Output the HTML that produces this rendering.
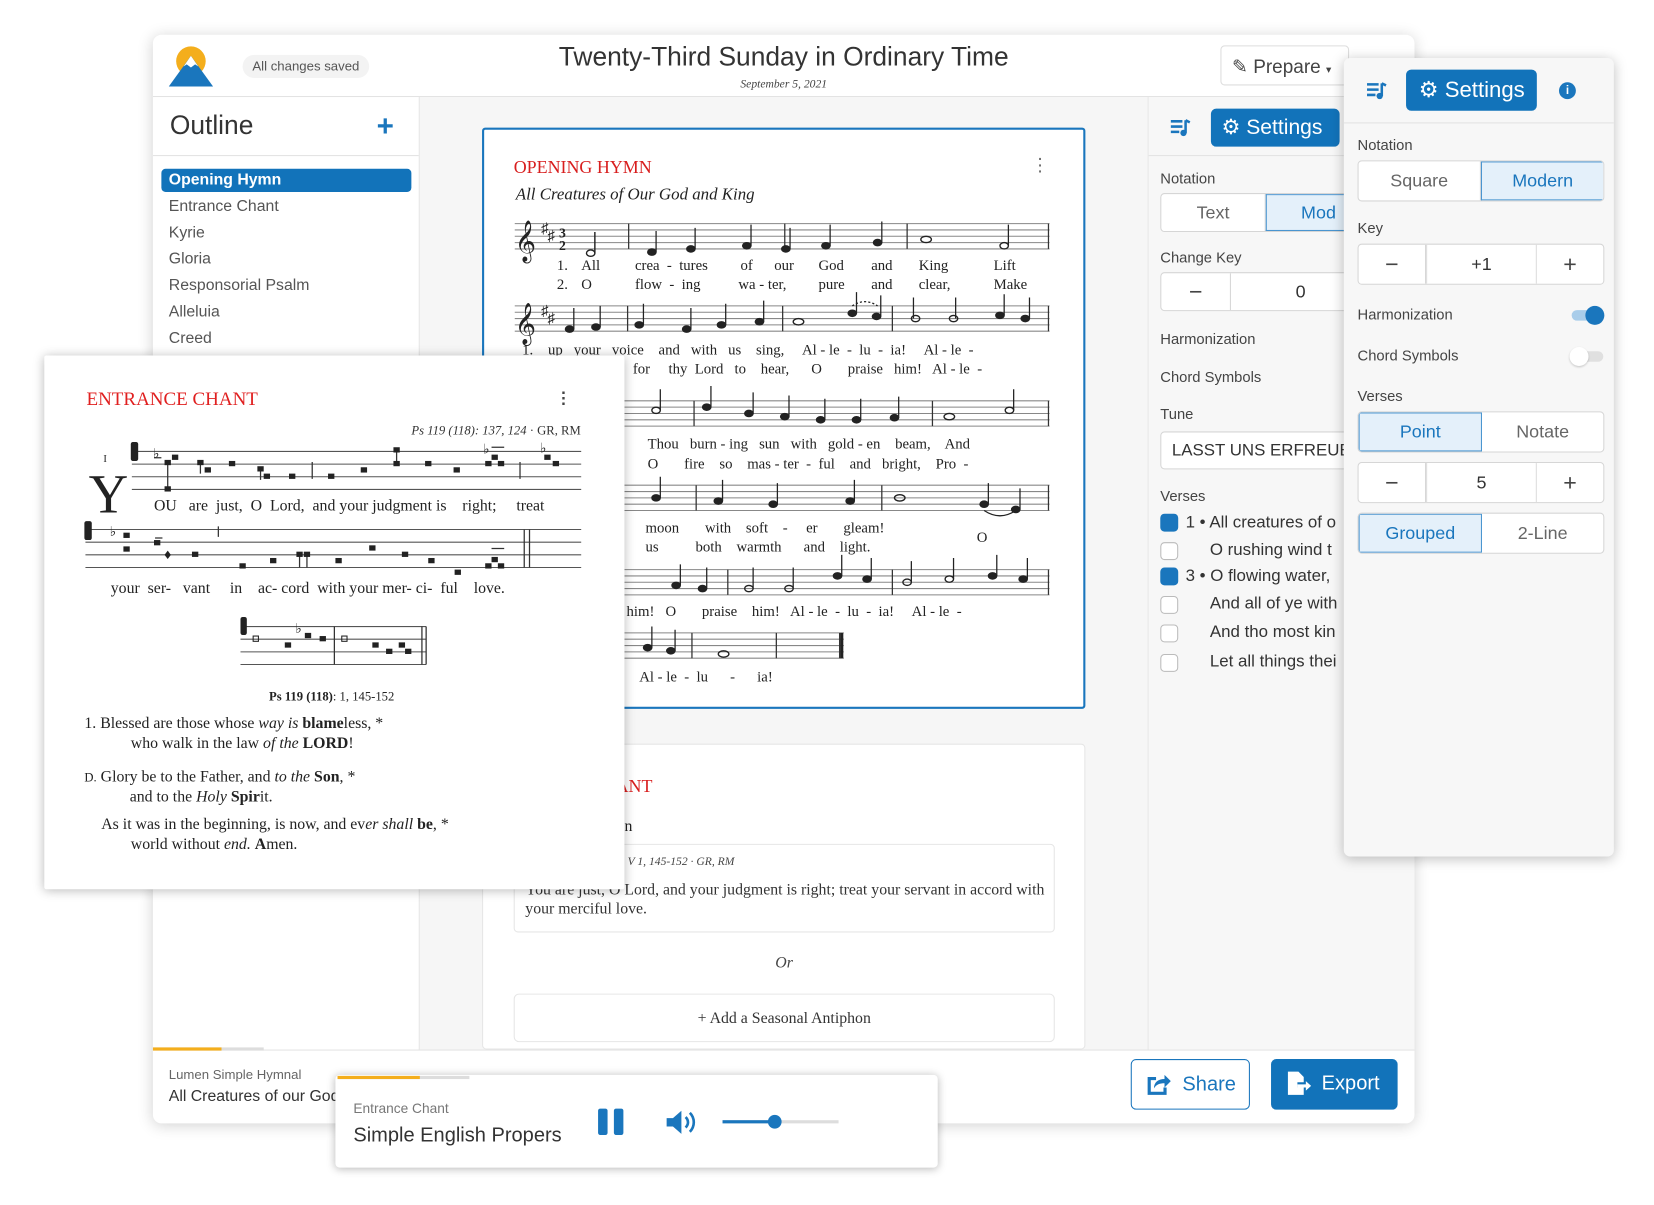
<!DOCTYPE html>
<html><head><meta charset="utf-8"><style>
*{box-sizing:border-box;margin:0;padding:0}
body{width:1654px;height:1204px;background:#fff;position:relative;overflow:hidden;font-family:"Liberation Sans","DejaVu Sans",sans-serif;color:#333}
#w{position:absolute;left:0;top:0;width:1568px;height:1142px;transform:scale(1.0548);transform-origin:0 0}
.a{position:absolute}
.serif{font-family:"Liberation Serif",serif}
.lbl{font-size:14px;color:#444}
.seg{position:absolute;display:flex;border:1px solid #d6d6d6;border-radius:4px;background:#fff;overflow:hidden}
.seg div{flex:1;display:flex;align-items:center;justify-content:center;font-size:17px;color:#666;border-right:1px solid #d6d6d6}
.seg div:last-child{border-right:none}
.seg .on{background:#e4f0fa;color:#1a76bd;border:1px solid #4a95d0}
.cb{position:absolute;width:17px;height:17px;border:1px solid #bbb;border-radius:4px;background:#fff}
.cb.on{background:#1a76bd;border-color:#1a76bd}
.vt{position:absolute;font-size:16px;color:#333;white-space:nowrap}
.ol{position:absolute;left:160px;font-size:15px;color:#555}
svg text{white-space:pre}
</style></head><body><div id="w">

<div class="a" style="left:145px;top:33px;width:1196px;height:1032px;background:#fff;border-radius:8px;box-shadow:0 2px 14px rgba(0,0,0,.18)"></div>
<div class="a" style="left:145px;top:91px;width:1196px;height:1px;background:#e3e3e3"></div>
<svg class="a" style="left:160px;top:43px" width="42" height="40" viewBox="0 0 42 40"><circle cx="21" cy="15" r="14" fill="#f4ae1c"/><path d="M0 39 L21 10 L42 39Z" fill="#1a76bd"/><path d="M14 20 L21 10 L28 20 L25 18 L21 21 L17 18Z" fill="#fff"/></svg>
<div class="a" style="left:230px;top:52px;width:120px;height:22px;border-radius:11px;background:#f3f3f3;font-size:12.5px;color:#555;text-align:center;line-height:22px">All changes saved</div>
<div class="a" style="left:420px;top:40px;width:646px;text-align:center;font-size:25px;color:#333">Twenty-Third Sunday in Ordinary Time</div>
<div class="a serif" style="left:420px;top:74px;width:646px;text-align:center;font-size:11px;font-style:italic;color:#444">September 5, 2021</div>
<div class="a" style="left:1157px;top:43px;width:122px;height:38px;border:1px solid #ddd;border-radius:4px;font-size:18px;color:#444;line-height:38px;padding-left:10px">✎ Prepare <span style="font-size:10px">▾</span></div>

<div class="a" style="left:397px;top:92px;width:1px;height:903px;background:#e3e3e3"></div>
<div class="a" style="left:161px;top:105px;font-size:25px;color:#333">Outline</div>
<div class="a" style="left:357px;top:104px;font-size:28px;color:#1a76bd;font-weight:bold">+</div>
<div class="a" style="left:145px;top:147px;width:252px;height:1px;background:#e3e3e3"></div>
<div class="a" style="left:153px;top:160px;width:237px;height:22px;background:#1273ba;border-radius:4px;color:#fff;font-size:15px;padding-left:7px;line-height:22px;font-weight:bold">Opening Hymn</div>
<div class="ol" style="top:187px">Entrance Chant</div>
<div class="ol" style="top:212px">Kyrie</div>
<div class="ol" style="top:237px">Gloria</div>
<div class="ol" style="top:262px">Responsorial Psalm</div>
<div class="ol" style="top:287px">Alleluia</div>
<div class="ol" style="top:312px">Creed</div>

<div class="a" style="left:398px;top:92px;width:690px;height:903px;background:#f6f6f6"></div>
<div class="a" style="left:1088px;top:92px;width:1px;height:903px;background:#e3e3e3"></div>
<div class="a" style="left:1089px;top:92px;width:252px;height:903px;background:#f7f7f7"></div>
<svg class="a" style="left:1109px;top:112px" width="20" height="18" viewBox="0 0 20 18"><path d="M1 3h11M1 8h11M1 13h8" stroke="#1a76bd" stroke-width="2.4"/><path d="M15 2v12" stroke="#1a76bd" stroke-width="2.4"/><circle cx="13" cy="14" r="3" fill="#1a76bd"/><path d="M15 2l4 2" stroke="#1a76bd" stroke-width="2.4"/></svg>
<div class="a" style="left:1148px;top:103px;width:122px;height:36px;background:#1273ba;border-radius:5px;color:#fff;font-size:20px;line-height:36px;padding-left:10px">⚙ Settings</div>
<div class="a" style="left:1089px;top:147px;width:252px;height:1px;background:#e3e3e3"></div>
<div class="a lbl" style="left:1100px;top:161px">Notation</div>
<div class="seg" style="left:1100px;top:183px;width:200px;height:37px"><div>Text</div><div class="on">Mod</div></div>
<div class="a lbl" style="left:1100px;top:236px">Change Key</div>
<div class="seg" style="left:1100px;top:258px;width:200px;height:37px"><div style="flex:0 0 66px;font-size:22px;color:#444">−</div><div style="color:#333">0</div></div>
<div class="a lbl" style="left:1100px;top:313px">Harmonization</div>
<div class="a lbl" style="left:1100px;top:349px">Chord Symbols</div>
<div class="a lbl" style="left:1100px;top:384px">Tune</div>
<div class="a" style="left:1100px;top:409px;width:200px;height:36px;background:#fff;border:1px solid #d6d6d6;border-radius:4px;font-size:16px;line-height:36px;padding-left:10px;color:#333;white-space:nowrap;overflow:hidden">LASST UNS ERFREUEN</div>
<div class="a lbl" style="left:1100px;top:462px">Verses</div>
<div class="cb on" style="left:1100px;top:487px"></div><div class="vt" style="left:1124px;top:487px">1 • All creatures of o</div>
<div class="cb" style="left:1100px;top:514px"></div><div class="vt" style="left:1147px;top:513px">O rushing wind t</div>
<div class="cb on" style="left:1100px;top:538px"></div><div class="vt" style="left:1124px;top:538px">3 • O flowing water,</div>
<div class="cb" style="left:1100px;top:565px"></div><div class="vt" style="left:1147px;top:564px">And all of ye with</div>
<div class="cb" style="left:1100px;top:592px"></div><div class="vt" style="left:1147px;top:591px">And tho most kin</div>
<div class="cb" style="left:1100px;top:620px"></div><div class="vt" style="left:1147px;top:619px">Let all things thei</div>

<div class="a" style="left:457px;top:121px;width:572px;height:551px;background:#fff;border:2px solid #1a76bd;border-radius:3px"></div>
<div class="a serif" style="left:487px;top:149px;font-size:17px;color:#d81e1e">OPENING HYMN</div>
<div class="a serif" style="left:489px;top:176px;font-size:16px;font-style:italic;color:#222">All Creatures of Our God and King</div>
<div class="a" style="left:983px;top:147px;font-size:18px;color:#666;line-height:6px">·<br>·<br>·</div>
<svg class="a" style="left:0;top:0" width="1568" height="1142">
<g stroke="#888" stroke-width="1">
<path d="M488 212H995M488 218H995M488 224H995M488 230H995M488 236H995"/>
<path d="M488 290H995M488 296H995M488 302H995M488 308H995M488 314H995"/>
<path d="M592 380H995M592 386H995M592 392H995M592 398H995M592 404H995"/>
<path d="M592 460H995M592 466H995M592 472H995M592 478H995M592 484H995"/>
<path d="M592 540H995M592 546H995M592 552H995M592 558H995M592 564H995"/>
<path d="M592 600H800M592 606H800M592 612H800M592 618H800M592 624H800"/>
</g>
<g stroke="#333" stroke-width="1.2">
<path d="M596 212v24M744 212v24M860 212v24M994 212v24"/>
<path d="M595 290v24M742 290v24M846 290v24M994 290v24"/>
<path d="M658 380v24M884 380v24M994 380v24"/>
<path d="M660 460v24M836 460v24M994 460v24"/>
<path d="M690 540v24M846 540v24M994 540v24"/>
<path d="M656 600v24M736 600v24M796 600v24"/>
</g>
<path d="M798 600v24" stroke="#222" stroke-width="3"/>
<g font-family="Liberation Serif,serif" font-size="34" fill="#222"><text x="488" y="240">𝄞</text><text x="488" y="318">𝄞</text></g>
<g font-family="Liberation Serif,serif" font-size="14" fill="#222"><text x="513" y="221">♯</text><text x="519" y="228">♯</text><text x="513" y="299">♯</text><text x="519" y="306">♯</text><text x="530" y="225" font-weight="bold" font-size="13">3</text><text x="530" y="237" font-weight="bold" font-size="13">2</text></g>
<g fill="#222" stroke="#222" stroke-width="1.2">
<ellipse cx="618" cy="239" rx="4" ry="3"/><ellipse cx="655" cy="236" rx="4" ry="3"/><ellipse cx="708" cy="233" rx="4" ry="3"/><ellipse cx="745" cy="236" rx="4" ry="3"/><ellipse cx="783" cy="233" rx="4" ry="3"/><ellipse cx="832" cy="230" rx="4" ry="3"/>
<path d="M564 240v-20M622 239v-20M659 236v-20M712 233v-20M749 236v-20M787 233v-20M836 230v-20M956 233v-20"/>
<ellipse cx="540" cy="312" rx="4" ry="3"/><ellipse cx="565" cy="310" rx="4" ry="3"/><ellipse cx="606" cy="308" rx="4" ry="3"/><ellipse cx="651" cy="312" rx="4" ry="3"/><ellipse cx="684" cy="308" rx="4" ry="3"/><ellipse cx="720" cy="305" rx="4" ry="3"/><ellipse cx="808" cy="297" rx="4" ry="3"/><ellipse cx="831" cy="300" rx="4" ry="3"/><ellipse cx="948" cy="299" rx="4" ry="3"/><ellipse cx="972" cy="302" rx="4" ry="3"/>
<path d="M544 312v-20M569 310v-20M610 308v-20M655 312v-20M688 308v-20M724 305v-20M812 297v-20M835 300v-20M952 299v-20M976 302v-20"/>
<ellipse cx="670" cy="386" rx="4" ry="3"/><ellipse cx="710" cy="392" rx="4" ry="3"/><ellipse cx="744" cy="395" rx="4" ry="3"/><ellipse cx="778" cy="398" rx="4" ry="3"/><ellipse cx="812" cy="398" rx="4" ry="3"/><ellipse cx="848" cy="396" rx="4" ry="3"/>
<path d="M674 386v-20M714 392v-20M748 395v-20M782 398v-20M816 398v-20M852 396v-20"/>
<ellipse cx="622" cy="472" rx="4" ry="3"/><ellipse cx="681" cy="475" rx="4" ry="3"/><ellipse cx="733" cy="478" rx="4" ry="3"/><ellipse cx="806" cy="475" rx="4" ry="3"/><ellipse cx="933" cy="478" rx="4" ry="3"/><ellipse cx="963" cy="483" rx="4" ry="3"/>
<path d="M626 472v-20M685 475v-20M737 478v-20M810 475v-20M937 478v-20M967 483v-20"/>
<ellipse cx="641" cy="555" rx="4" ry="3"/><ellipse cx="666" cy="558" rx="4" ry="3"/><ellipse cx="794" cy="546" rx="4" ry="3"/><ellipse cx="822" cy="549" rx="4" ry="3"/><ellipse cx="941" cy="546" rx="4" ry="3"/><ellipse cx="970" cy="549" rx="4" ry="3"/>
<path d="M645 555v-20M670 558v-20M798 546v-20M826 549v-20M945 546v-20M974 549v-20"/>
<ellipse cx="614" cy="614" rx="4" ry="3"/><ellipse cx="636" cy="617" rx="4" ry="3"/>
<path d="M618 614v-20M640 617v-20"/>
</g>
<g fill="none" stroke="#222" stroke-width="1.3"><ellipse cx="560" cy="240" rx="4" ry="3"/><ellipse cx="952" cy="233" rx="4" ry="3"/><ellipse cx="757" cy="305" rx="5" ry="3"/><ellipse cx="868" cy="302" rx="4" ry="3"/><ellipse cx="904" cy="302" rx="4" ry="3"/><ellipse cx="622" cy="389" rx="4" ry="3"/><ellipse cx="900" cy="395" rx="5" ry="3"/><ellipse cx="957" cy="389" rx="4" ry="3"/><ellipse cx="853" cy="472" rx="5" ry="3"/><ellipse cx="710" cy="558" rx="4" ry="3"/><ellipse cx="748" cy="558" rx="4" ry="3"/><ellipse cx="860" cy="552" rx="4" ry="3"/><ellipse cx="900" cy="549" rx="4" ry="3"/><ellipse cx="686" cy="620" rx="5" ry="3"/><ellipse cx="878" cy="227" rx="5" ry="3"/></g>
<g fill="none" stroke="#222" stroke-width="1.2"><path d="M564 240v-20M866 302v-20M906 302v-20M626 389v-20M961 389v-20M714 558v-20M752 558v-20M864 552v-20M904 549v-20"/><path d="M933 484q15 10 30 0"/><path d="M808 290q12-8 24 0" stroke-dasharray="2 2"/></g>
<g font-family="Liberation Serif,serif" font-size="14" fill="#222">
<text x="528" y="256">1.</text><text x="551" y="256">All</text><text x="602" y="256">crea  -  tures</text><text x="702" y="256">of</text><text x="734" y="256">our</text><text x="776" y="256">God</text><text x="826" y="256">and</text><text x="871" y="256">King</text><text x="942" y="256">Lift</text>
<text x="528" y="274">2.</text><text x="551" y="274">O</text><text x="602" y="274">flow  -  ing</text><text x="700" y="274">wa - ter,</text><text x="776" y="274">pure</text><text x="826" y="274">and</text><text x="871" y="274">clear,</text><text x="942" y="274">Make</text>
<text x="495" y="336">1.    up   your   voice    and   with   us    sing,     Al - le  -  lu  -  ia!     Al - le  -</text>
<text x="600" y="354">for     thy  Lord   to    hear,      O       praise   him!   Al - le  -</text>
<text x="614" y="425">Thou   burn - ing   sun   with   gold - en    beam,    And</text>
<text x="614" y="444">O       fire    so    mas - ter  -  ful    and   bright,    Pro  -</text>
<text x="612" y="505">moon       with    soft    -     er       gleam!</text>
<text x="612" y="523">us          both    warmth      and    light.</text><text x="926" y="514">O</text>
<text x="594" y="584">him!   O       praise    him!   Al - le  -  lu  -  ia!     Al - le  -</text>
<text x="606" y="646">Al - le  -  lu      -      ia!</text>
</g>
</svg>

<div class="a" style="left:457px;top:705px;width:572px;height:290px;background:#fff;border:1px solid #e6e6e6;border-radius:4px"></div>
<div class="a serif" style="left:560px;top:736px;font-size:17px;color:#d81e1e">CHANT</div>
<div class="a serif" style="left:592px;top:776px;font-size:15px;color:#222">n</div>
<div class="a" style="left:487px;top:800px;width:513px;height:84px;border:1px solid #e6e6e6;border-radius:4px"></div>
<div class="a serif" style="left:595px;top:811px;font-size:11px;font-style:italic;color:#444">V 1, 145-152 · GR, RM</div>
<div class="a serif" style="left:498px;top:835px;width:495px;font-size:15px;color:#333;line-height:18px">You are just, O Lord, and your judgment is right; treat your servant in accord with your merciful love.</div>
<div class="a serif" style="left:735px;top:905px;font-size:15px;font-style:italic;color:#444">Or</div>
<div class="a serif" style="left:487px;top:942px;width:513px;height:46px;border:1px solid #e6e6e6;border-radius:5px;text-align:center;line-height:46px;font-size:15px;color:#333">+ Add a Seasonal Antiphon</div>

<div class="a" style="left:145px;top:995px;width:1196px;height:1px;background:#e3e3e3"></div>
<div class="a" style="left:145px;top:993px;width:105px;height:3px;background:#ddd"></div>
<div class="a" style="left:145px;top:993px;width:65px;height:3px;background:#f4ae1c"></div>
<div class="a" style="left:160px;top:1012px;font-size:12.5px;color:#666">Lumen Simple Hymnal</div>
<div class="a" style="left:160px;top:1031px;font-size:15px;color:#333;white-space:nowrap">All Creatures of our God</div>
<div class="a" style="left:1072px;top:1004px;width:113px;height:48px;border:1px solid #1a76bd;border-radius:5px;color:#1a76bd;font-size:19px;line-height:48px;padding-left:48px">Share</div>
<svg class="a" style="left:1086px;top:1017px" width="24" height="22" viewBox="0 0 24 22"><path d="M2 4h8v3H5v11h12v-4h3v7H2z" fill="#1a76bd"/><path d="M8 15c0-6 4-9 10-9V2l6 6-6 6v-4c-4 0-8 1-10 5z" fill="#1a76bd"/></svg>
<div class="a" style="left:1205px;top:1004px;width:120px;height:48px;background:#1273ba;border-radius:5px;color:#fff;font-size:19px;line-height:48px;padding-left:48px">Export</div>
<svg class="a" style="left:1219px;top:1015px" width="24" height="24" viewBox="0 0 24 24"><path d="M2 1h10l5 5v5h-6v5h6v7H2z" fill="#fff"/><path d="M11 13h8v-3l5 4.5-5 4.5v-3h-8z" fill="#fff"/></svg>

<!-- entrance chant card -->
<div class="a" style="left:42px;top:337px;width:550px;height:506px;background:#fff;box-shadow:0 1px 10px rgba(0,0,0,.28);border-radius:2px"></div>
<div class="a serif" style="left:82px;top:368px;font-size:18px;color:#e02020">ENTRANCE CHANT</div>
<div class="a" style="left:532px;top:371px;font-size:16px;color:#444;line-height:5px;font-weight:bold">·<br>·<br>·</div>
<div class="a serif" style="left:390px;top:401px;font-size:12px;color:#333"><i>Ps 119 (118): 137, 124</i> · GR, RM</div>
<svg class="a" style="left:0;top:0" width="600" height="850">
<g stroke="#555" stroke-width="1"><path d="M125 428H551M125 440H551M125 452H551M125 464H551"/><path d="M81 502H551M81 514H551M81 526H551M81 538H551"/><path d="M228 594H404M228 606H404M228 618H404M228 630H404"/></g>
<g stroke="#333" stroke-width="1.2"><path d="M296 438v16M493 438v16M159 439v25M190 439v10M247 445v10M345 446v0M376 427v13M463 440v-1"/><path d="M207 499v10M230 537v0M284 526v12M291 526v12"/><path d="M317 594v36"/><path d="M497 502v36M502 502v36M400 594v36M404 594v36"/><path d="M466 424h12M466 520h12M146 434h7M147 510h7"/></g>
<g fill="#222">
<rect x="124" y="419" width="7" height="18" rx="2"/><rect x="80" y="494" width="7" height="18" rx="2"/><rect x="228" y="585" width="6" height="17" rx="2"/>
<rect x="156" y="436" width="6" height="5"/><rect x="156" y="461" width="6" height="5"/><rect x="163" y="431" width="6" height="5"/><rect x="187" y="436" width="6" height="5"/><rect x="194" y="443" width="6" height="5"/><rect x="217" y="437" width="6" height="5"/><rect x="244" y="442" width="6" height="5"/><rect x="250" y="449" width="6" height="5"/><rect x="274" y="449" width="6" height="5"/><rect x="311" y="449" width="6" height="5"/><rect x="342" y="443" width="6" height="5"/><rect x="373" y="424" width="6" height="5"/><rect x="373" y="437" width="6" height="5"/><rect x="403" y="437" width="6" height="5"/><rect x="430" y="443" width="6" height="5"/><rect x="460" y="437" width="6" height="5"/><rect x="466" y="431" width="6" height="5"/><rect x="472" y="437" width="6" height="5"/><rect x="516" y="431" width="6" height="5"/><rect x="524" y="437" width="6" height="5"/>
<rect x="117" y="505" width="6" height="5"/><rect x="117" y="518" width="6" height="5"/><rect x="146" y="512" width="6" height="5"/><path d="M159 522l3 4-3 4-3-4z"/><rect x="182" y="523" width="6" height="5"/><rect x="227" y="534" width="6" height="5"/><rect x="256" y="529" width="6" height="5"/><rect x="281" y="523" width="6" height="5"/><rect x="288" y="523" width="6" height="5"/><rect x="318" y="529" width="6" height="5"/><rect x="350" y="517" width="6" height="5"/><rect x="381" y="523" width="6" height="5"/><rect x="406" y="529" width="6" height="5"/><rect x="431" y="540" width="6" height="5"/><rect x="460" y="534" width="6" height="5"/><rect x="466" y="528" width="6" height="5"/><rect x="472" y="534" width="6" height="5"/>
<rect x="270" y="609" width="6" height="5"/><rect x="289" y="600" width="6" height="5"/><rect x="303" y="603" width="6" height="5"/><rect x="353" y="609" width="6" height="5"/><rect x="366" y="615" width="6" height="5"/><rect x="378" y="609" width="6" height="5"/><rect x="384" y="615" width="6" height="5"/>
</g>
<g font-family="Liberation Serif,serif" font-size="13" fill="#222"><text x="145" y="434">♭</text><text x="458" y="430">♭</text><text x="512" y="429">♭</text><text x="104" y="508">♭</text><text x="280" y="600">♭</text></g>
<g fill="none" stroke="#222"><rect x="240" y="603" width="5" height="5"/><rect x="324" y="603" width="5" height="5"/></g>
<text x="84" y="486" font-family="Liberation Serif,serif" font-size="52" fill="#222">Y</text>
<text x="98" y="438" font-family="Liberation Serif,serif" font-size="10" fill="#222">I</text>
<g font-family="Liberation Serif,serif" font-size="15" fill="#222">
<text x="146" y="484">OU   are  just,  O  Lord,  and your judgment is    right;     treat</text>
<text x="105" y="562">your  ser-   vant     in    ac- cord  with your mer- ci-  ful    love.</text>
<text x="255" y="664" font-size="12"><tspan font-weight="bold">Ps 119 (118)</tspan>: 1, 145-152</text>
</g>
</svg>
<div class="a serif" style="left:80px;top:677px;font-size:15px;color:#222;line-height:19px;white-space:nowrap">1. Blessed are those whose <i>way is</i> <b>blame</b>less, *<br><span style="padding-left:44px">who walk in the law <i>of the</i> <b>LORD</b>!</span></div>
<div class="a serif" style="left:80px;top:728px;font-size:15px;color:#222;line-height:19px;white-space:nowrap"><span style="font-size:12px">D.</span> Glory be to the Father, and <i>to the</i> <b>Son</b>, *<br><span style="padding-left:43px">and to the <i>Holy</i> <b>Spir</b>it.</span></div>
<div class="a serif" style="left:96px;top:773px;font-size:15px;color:#222;line-height:19px;white-space:nowrap">As it was in the beginning, is now, and ev<i>er shall</i> <b>be</b>, *<br><span style="padding-left:28px">world without <i>end.</i> <b>A</b>men.</span></div>

<!-- player -->
<div class="a" style="left:318px;top:1019px;width:571px;height:88px;background:#fff;box-shadow:0 1px 8px rgba(0,0,0,.28);border-radius:4px"></div>
<div class="a" style="left:320px;top:1020px;width:125px;height:3px;background:#ddd"></div>
<div class="a" style="left:320px;top:1020px;width:78px;height:3px;background:#f4ae1c"></div>
<div class="a" style="left:335px;top:1043px;font-size:13px;color:#777">Entrance Chant</div>
<div class="a" style="left:335px;top:1066px;font-size:19px;color:#333">Simple English Propers</div>
<div class="a" style="left:567px;top:1051px;width:9px;height:25px;background:#1a76bd;border-radius:2px"></div>
<div class="a" style="left:582px;top:1051px;width:9px;height:25px;background:#1a76bd;border-radius:2px"></div>
<svg class="a" style="left:630px;top:1052px" width="32" height="24" viewBox="0 0 32 24"><path d="M2 8h6l8-7v22l-8-7H2z" fill="#1a76bd"/><path d="M20 7c3 3 3 7 0 10M24 3c5 5 5 13 0 18" stroke="#1a76bd" stroke-width="2.5" fill="none"/></svg>
<div class="a" style="left:685px;top:1062px;width:110px;height:3px;background:#ddd"></div>
<div class="a" style="left:685px;top:1062px;width:50px;height:3px;background:#1a76bd"></div>
<div class="a" style="left:728px;top:1057px;width:13px;height:13px;border-radius:50%;background:#1a76bd"></div>

<!-- floating settings panel -->
<div class="a" style="left:1274px;top:55px;width:256px;height:757px;background:#f7f7f7;box-shadow:0 2px 12px rgba(0,0,0,.25);border-radius:6px"></div>
<svg class="a" style="left:1295px;top:77px" width="20" height="18" viewBox="0 0 20 18"><path d="M1 3h11M1 8h11M1 13h8" stroke="#1a76bd" stroke-width="2.4"/><path d="M15 2v12" stroke="#1a76bd" stroke-width="2.4"/><circle cx="13" cy="14" r="3" fill="#1a76bd"/><path d="M15 2l4 2" stroke="#1a76bd" stroke-width="2.4"/></svg>
<div class="a" style="left:1333px;top:66px;width:124px;height:39px;background:#1273ba;border-radius:5px;color:#fff;font-size:21px;line-height:39px;padding-left:12px">⚙ Settings</div>
<div class="a" style="left:1478px;top:78px;width:16px;height:16px;border-radius:50%;background:#1a76bd;color:#fff;font-size:11px;font-weight:bold;text-align:center;line-height:16px">i</div>
<div class="a" style="left:1274px;top:116px;width:256px;height:1px;background:#e3e3e3"></div>
<div class="a lbl" style="left:1287px;top:129px">Notation</div>
<div class="seg" style="left:1287px;top:152px;width:234px;height:39px"><div>Square</div><div class="on">Modern</div></div>
<div class="a lbl" style="left:1287px;top:208px">Key</div>
<div class="seg" style="left:1287px;top:231px;width:234px;height:39px"><div style="font-size:22px;color:#444">−</div><div style="flex:0 0 105px;color:#333;border-left:1px solid #ddd;border-right:1px solid #ddd">+1</div><div style="font-size:22px;color:#444">+</div></div>
<div class="a lbl" style="left:1287px;top:290px">Harmonization</div>
<div class="a" style="left:1490px;top:294px;width:28px;height:10px;border-radius:5px;background:#a9cdea"></div>
<div class="a" style="left:1503px;top:290px;width:18px;height:18px;border-radius:50%;background:#1a76bd"></div>
<div class="a lbl" style="left:1287px;top:329px">Chord Symbols</div>
<div class="a" style="left:1492px;top:333px;width:28px;height:10px;border-radius:5px;background:#e0e0e0"></div>
<div class="a" style="left:1488px;top:329px;width:18px;height:18px;border-radius:50%;background:#fff;box-shadow:0 1px 2px rgba(0,0,0,.2)"></div>
<div class="a lbl" style="left:1287px;top:367px">Verses</div>
<div class="seg" style="left:1287px;top:390px;width:234px;height:39px"><div class="on">Point</div><div>Notate</div></div>
<div class="seg" style="left:1287px;top:438px;width:234px;height:39px"><div style="font-size:22px;color:#444">−</div><div style="flex:0 0 105px;color:#333;border-left:1px solid #ddd;border-right:1px solid #ddd">5</div><div style="font-size:22px;color:#444">+</div></div>
<div class="seg" style="left:1287px;top:486px;width:234px;height:39px"><div class="on">Grouped</div><div>2-Line</div></div>
</div></body></html>
